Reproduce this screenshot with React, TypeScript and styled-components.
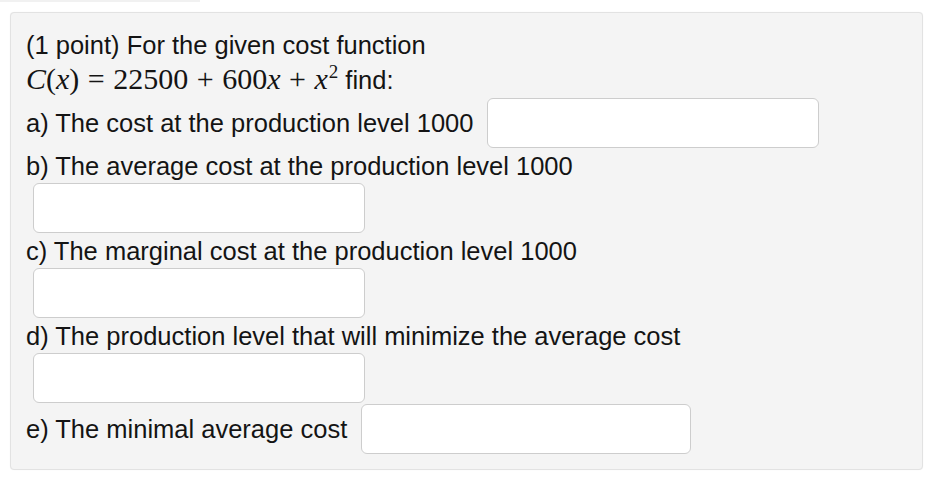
import styled, { createGlobalStyle } from "styled-components";

const Global = createGlobalStyle`
  html, body {
    margin: 0;
    padding: 0;
    background: #fff;
  }
  body {
    font-family: "Liberation Sans", Arial, sans-serif;
    color: #141414;
  }
`;

const Page = styled.div`
  width: 936px;
  height: 500px;
  overflow: hidden;
`;

const TopRule = styled.div`
  width: 200px;
  height: 2px;
  background: #f1f1f1;
`;

const Panel = styled.div`
  margin: 10px 12px 0 10px;
  box-sizing: border-box;
  width: 913px;
  height: 458px;
  padding: 15px;
  background: #f4f4f4;
  border: 1px solid #e2e2e2;
  border-radius: 4px;
  box-shadow: 0 0 1px rgba(0, 0, 0, 0.08);
  font-size: 25.5px;
`;

const Intro = styled.div`
  line-height: 35px;
  height: 70px;
`;

const Formula = styled.span`
  font-family: "Liberation Serif", "Times New Roman", serif;
  font-size: 30px;
  line-height: 1;
`;

const Var = styled.i`
  font-style: italic;
`;

const Op = styled.span`
  padding: 0 8.5px;
`;

const Sup = styled.sup`
  font-size: 19px;
  line-height: 0;
  vertical-align: 0;
  position: relative;
  top: -11px;
  margin-left: 1px;
`;

const Row = styled.div<{ $gap?: number }>`
  display: flex;
  align-items: center;
  gap: 14px;
  height: 50px;
  margin-top: ${(p) => p.$gap ?? 0}px;
`;

const Label = styled.div`
  line-height: 34px;
  margin-top: 1px;
`;

const Answer = styled.input<{ $w?: number; $indent?: number }>`
  box-sizing: border-box;
  width: ${(p) => p.$w ?? 332}px;
  height: 50px;
  margin: 0 0 0 ${(p) => p.$indent ?? 0}px;
  padding: 0 8px;
  background: #fff;
  border: 1.5px solid #cdcdcd;
  border-radius: 6px;
  font: inherit;
  outline: none;
  display: block;
`;

export default function App() {
  return (
    <Page>
      <Global />
      <TopRule />
      <Panel>
        <Intro>
          (1 point) For the given cost function
          <br />
          <Formula>
            <Var>C</Var>(<Var>x</Var>)<Op>=</Op>22500<Op>+</Op>600<Var>x</Var>
            <Op>+</Op>
            <Var>x</Var>
            <Sup>2</Sup>
          </Formula>{" "}
          find:
        </Intro>
        <Row>
          <span>a) The cost at the production level 1000</span>
          <Answer type="text" />
        </Row>
        <Label>b) The average cost at the production level 1000</Label>
        <Answer type="text" $indent={7} />
        <Label>c) The marginal cost at the production level 1000</Label>
        <Answer type="text" $indent={7} />
        <Label>d) The production level that will minimize the average cost</Label>
        <Answer type="text" $indent={7} />
        <Row $gap={1}>
          <span>e) The minimal average cost</span>
          <Answer type="text" $w={330} />
        </Row>
      </Panel>
    </Page>
  );
}
